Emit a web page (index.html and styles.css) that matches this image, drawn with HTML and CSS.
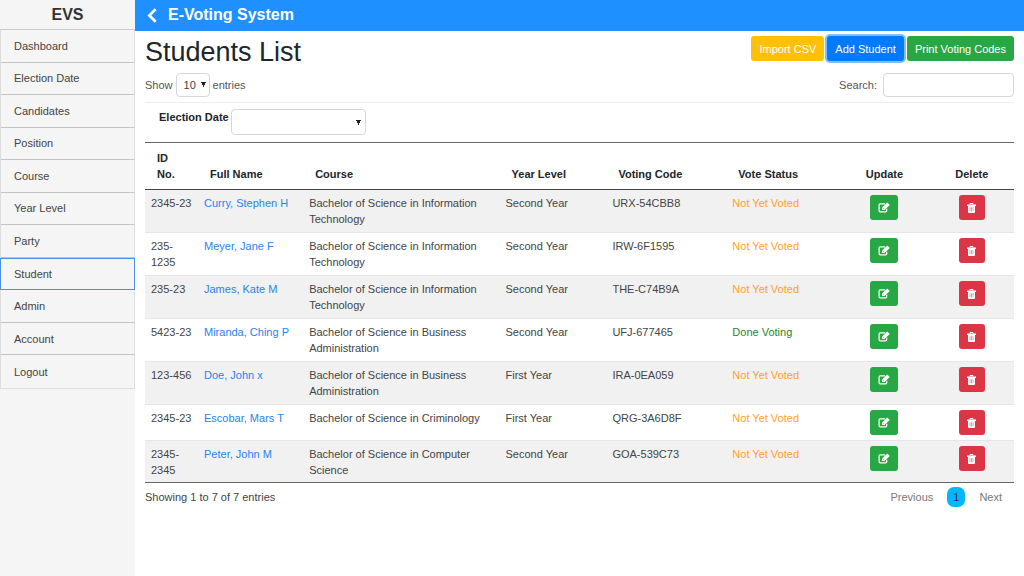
FILE: index.html
```html
<!DOCTYPE html>
<html lang="en">
<head>
<meta charset="utf-8">
<meta name="viewport" content="width=device-width, initial-scale=1">
<title>E-Voting System</title>
<link rel="stylesheet" href="styles.css">
</head>
<body>
<svg class="sprite" aria-hidden="true">
  <symbol id="edit" viewBox="0 0 22 20"><path d="M16 12.500V16q0 2-2 2H4q-2 0-2-2V5.500q0-2 2-2h9" fill="none" stroke="currentColor" stroke-width="2.200"/><path d="M7.500 14.500v-4.500L17 1l4.500 4.500L12 14.500z" fill="currentColor"/><path d="M9 10.500l2.500 2.500" stroke="#28a745" stroke-width="1"/></symbol>
  <symbol id="trash" viewBox="0 0 18 20"><path d="M6 3V1h6v2" fill="none" stroke="currentColor" stroke-width="2"/><path d="M0 3h18v3H0zM2 6h14v12q0 2-2 2H4q-2 0-2-2z" fill="currentColor"/><path d="M6 8.500v8M9 8.500v8M12 8.500v8" stroke="#dc3545" stroke-width="1"/></symbol>
</svg>
<div class="app">
  <aside class="sidebar">
    <div class="brand">EVS</div>
    <nav class="menu">
      <a href="#">Dashboard</a>
      <a href="#">Election Date</a>
      <a href="#">Candidates</a>
      <a href="#">Position</a>
      <a href="#">Course</a>
      <a href="#">Year Level</a>
      <a href="#">Party</a>
      <a href="#" class="active" aria-current="page">Student</a>
      <a href="#">Admin</a>
      <a href="#">Account</a>
      <a href="#">Logout</a>
    </nav>
  </aside>
  <div class="page">
    <header class="topbar">
      <button class="back" type="button" aria-label="Toggle menu"><svg viewBox="0 0 10 14"><path d="M8 2L3 7l5 5" fill="none" stroke="currentColor" stroke-width="2.500" stroke-linecap="square"/></svg></button>
      <span>E-Voting System</span>
    </header>
    <main class="content">
      <div class="heading">
        <h1>Students List</h1>
        <div class="actions">
          <button type="button" class="btn warning">Import CSV</button>
          <button type="button" class="btn primary">Add Student</button>
          <button type="button" class="btn success">Print Voting Codes</button>
        </div>
      </div>
      <div class="controls">
        <label class="length">Show
          <select class="field"><option>10</option></select>
          entries</label>
        <label class="search">Search: <input class="field" type="search"></label>
      </div>
      <div class="filter">
        <label for="election">Election Date</label>
        <select id="election" class="field"><option></option></select>
      </div>
      <table class="students">
        <colgroup><col class="c-id"><col class="c-name"><col class="c-course"><col class="c-year"><col class="c-code"><col class="c-status"><col class="c-update"><col class="c-delete"></colgroup>
        <thead>
          <tr><th>ID No.</th><th>Full Name</th><th>Course</th><th>Year Level</th><th>Voting Code</th><th>Vote Status</th><th class="center">Update</th><th class="center">Delete</th></tr>
        </thead>
        <tbody>
          <tr><td>2345-23</td><td><a href="#">Curry, Stephen H</a></td><td>Bachelor of Science in Information Technology</td><td>Second Year</td><td>URX-54CBB8</td><td class="pending">Not Yet Voted</td><td class="center"><button class="icon edit" type="button" aria-label="Update"><svg><use href="#edit"/></svg></button></td><td class="center"><button class="icon trash" type="button" aria-label="Delete"><svg><use href="#trash"/></svg></button></td></tr>
          <tr><td>235-1235</td><td><a href="#">Meyer, Jane F</a></td><td>Bachelor of Science in Information Technology</td><td>Second Year</td><td>IRW-6F1595</td><td class="pending">Not Yet Voted</td><td class="center"><button class="icon edit" type="button" aria-label="Update"><svg><use href="#edit"/></svg></button></td><td class="center"><button class="icon trash" type="button" aria-label="Delete"><svg><use href="#trash"/></svg></button></td></tr>
          <tr><td>235-23</td><td><a href="#">James, Kate M</a></td><td>Bachelor of Science in Information Technology</td><td>Second Year</td><td>THE-C74B9A</td><td class="pending">Not Yet Voted</td><td class="center"><button class="icon edit" type="button" aria-label="Update"><svg><use href="#edit"/></svg></button></td><td class="center"><button class="icon trash" type="button" aria-label="Delete"><svg><use href="#trash"/></svg></button></td></tr>
          <tr><td>5423-23</td><td><a href="#">Miranda, Ching P</a></td><td>Bachelor of Science in Business Administration</td><td>Second Year</td><td>UFJ-677465</td><td class="done">Done Voting</td><td class="center"><button class="icon edit" type="button" aria-label="Update"><svg><use href="#edit"/></svg></button></td><td class="center"><button class="icon trash" type="button" aria-label="Delete"><svg><use href="#trash"/></svg></button></td></tr>
          <tr><td>123-456</td><td><a href="#">Doe, John x</a></td><td>Bachelor of Science in Business Administration</td><td>First Year</td><td>IRA-0EA059</td><td class="pending">Not Yet Voted</td><td class="center"><button class="icon edit" type="button" aria-label="Update"><svg><use href="#edit"/></svg></button></td><td class="center"><button class="icon trash" type="button" aria-label="Delete"><svg><use href="#trash"/></svg></button></td></tr>
          <tr><td>2345-23</td><td><a href="#">Escobar, Mars T</a></td><td>Bachelor of Science in Criminology</td><td>First Year</td><td>QRG-3A6D8F</td><td class="pending">Not Yet Voted</td><td class="center"><button class="icon edit" type="button" aria-label="Update"><svg><use href="#edit"/></svg></button></td><td class="center"><button class="icon trash" type="button" aria-label="Delete"><svg><use href="#trash"/></svg></button></td></tr>
          <tr><td>2345-2345</td><td><a href="#">Peter, John M</a></td><td>Bachelor of Science in Computer Science</td><td>Second Year</td><td>GOA-539C73</td><td class="pending">Not Yet Voted</td><td class="center"><button class="icon edit" type="button" aria-label="Update"><svg><use href="#edit"/></svg></button></td><td class="center"><button class="icon trash" type="button" aria-label="Delete"><svg><use href="#trash"/></svg></button></td></tr>
        </tbody>
      </table>
      <div class="footer">
        <span>Showing 1 to 7 of 7 entries</span>
        <nav class="pager"><a href="#">Previous</a><a href="#" class="current" aria-current="page">1</a><a href="#">Next</a></nav>
      </div>
    </main>
  </div>
</div>
</body>
</html>
```
FILE: styles.css
```css
* { box-sizing: border-box; }
body {
  margin: 0;
  font: 11px/16px "Liberation Sans", Arial, sans-serif;
  color: #444;
  background: #fff;
}
button, input, select { font: inherit; color: inherit; }
button { cursor: pointer; border: 0; }
a { text-decoration: none; }
.sprite { display: none; }

.app { display: flex; min-height: 100vh; }
.sidebar { width: 135px; flex: none; background: #f5f5f5; }
.brand {
  font-size: 16px;
  font-weight: bold;
  line-height: 29px;
  text-align: center;
  color: #333;
}
.menu {
  display: grid;
  grid-auto-rows: 1fr;
  min-height: 360px;
  border: 1px solid #ddd;
  border-top-color: #ccc;
}
.menu a {
  display: flex;
  align-items: center;
  padding: 0 13px;
  color: #444;
  border-bottom: 1px solid #c4c4c4;
}
.menu a:last-child { border-bottom: 0; }
.menu .active { margin: 0 -1px; border: 1px solid #4a90e2; }

.page { flex: 1; min-width: 0; }
.topbar {
  display: flex;
  align-items: center;
  gap: 11px;
  min-height: 31px;
  padding: 0 11px 1px;
  background: #1e90ff;
  color: #fff;
  font-size: 16px;
  font-weight: bold;
}
.back { display: flex; padding: 0; background: none; color: #fff; }
.back svg { width: 11px; height: 15px; }

.content { padding: 5px 10px; }
.heading { display: flex; justify-content: space-between; align-items: flex-start; }
h1 { margin: 0; font-size: 27px; font-weight: normal; line-height: 32px; color: #212529; }
.actions { display: flex; gap: 3px; }
.btn { height: 25px; padding: 0 8px; border-radius: 3px; color: #fff; }
.warning { background: #ffc107; }
.primary { background: #007bff; box-shadow: 0 0 0 2px #80bdff; }
.success { background: #28a745; }

.field { border: 1px solid #d4d7da; border-radius: 4px; background: #fff; outline: 0; }
select.field {
  appearance: none;
  background-image: conic-gradient(from 333deg at 50% 100%, #222 54deg, transparent 0);
  background-repeat: no-repeat;
  background-size: 5px 5px;
}
.controls {
  display: flex;
  justify-content: space-between;
  padding: 5px 0;
  border-bottom: 1px solid #eee;
}
.length, .search { display: flex; align-items: center; gap: 3px; color: #555; }
.length .field { width: 34px; height: 24px; padding: 0 7px; color: #444; background-position: 24px 8px; }
.search { gap: 6px; }
.search .field { width: 131px; height: 24px; padding: 0 6px; }

.filter { display: flex; gap: 2px; padding: 6px 14px 7px; }
.filter label { font-weight: bold; color: #212529; }
.filter .field { width: 135px; height: 26px; background-position: right 4px center; }

/* Downward triangle shared by the drop-downs */
select.field {
  background-image: conic-gradient(from 333deg at 50% 100%, #222 54deg, transparent 0);
}

.students {
  width: 100%;
  table-layout: fixed;
  border-collapse: separate;
  border-spacing: 0;
  border-top: 1px solid #666;
  border-bottom: 1px solid #666;
}
.c-id { width: 6.1%; }
.c-name { width: 12.1%; }
.c-course { width: 22.6%; }
.c-year { width: 12.3%; }
.c-code { width: 13.8%; }
.c-status { width: 13%; }
.c-update { width: 10.4%; }
.c-delete { width: 9.7%; }
th {
  padding: 7px 12px;
  text-align: left;
  vertical-align: bottom;
  color: #212529;
  border-bottom: 1px solid #444;
}
td { padding: 5px 6px; vertical-align: top; border-bottom: 1px solid #e4e6e8; }
tbody tr:last-child td { padding-bottom: 4px; border-bottom: 0; }
tbody tr:nth-child(odd) { background: #f1f1f1; }
td a { color: #2a82ee; }
.center { padding-left: 0; padding-right: 0; text-align: center; }
.pending { color: #ff9f2e; }
.done { color: #238636; }
.icon {
  display: inline-flex;
  align-items: center;
  justify-content: center;
  vertical-align: top;
  height: 25px;
  padding: 0;
  border-radius: 3px;
  color: #fff;
}
.edit { width: 28px; background: #28a745; }
.trash { width: 26px; background: #dc3545; }
.edit svg { width: 12px; height: 11px; }
.trash svg { width: 9px; height: 10px; }

.footer { display: flex; justify-content: space-between; padding-top: 4px; color: #444; }
.footer > span { padding: 2px 0; }
.pager { display: flex; align-items: center; gap: 14px; padding-right: 12px; }
.pager a { color: #777; }
.pager .current {
  padding: 2px 6px;
  border-radius: 7px;
  background: #00b7ff;
  color: #234;
}
```
